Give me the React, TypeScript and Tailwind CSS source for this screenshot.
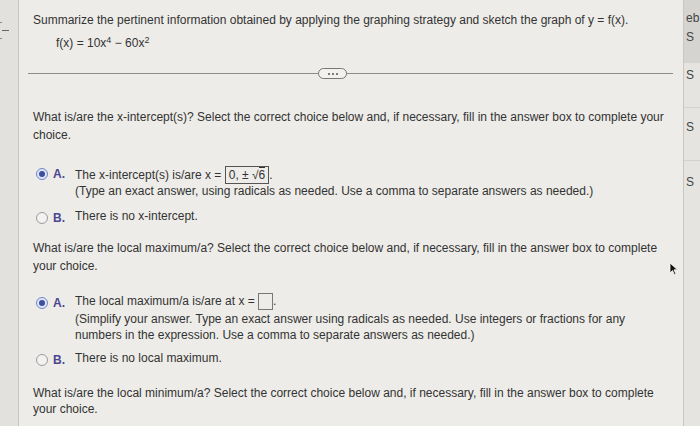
import React from 'react';

const Radio = ({ checked }: { checked?: boolean }) => (
  <span
    className={`inline-flex h-[12px] w-[12px] shrink-0 items-center justify-center rounded-full border ${
      checked ? 'border-[#6f86c9] bg-[#dfe6f7]' : 'border-[#9a9aa6] bg-[#f3f2ef]'
    }`}
  >
    {checked && <span className="h-[6px] w-[6px] rounded-full bg-[#3d4f9e]" />}
  </span>
);

const Choice = ({
  letter,
  checked,
  children,
  className = '',
}: {
  letter: string;
  checked?: boolean;
  children: React.ReactNode;
  className?: string;
}) => (
  <div className={`flex items-start pl-[3px] ${className}`}>
    <div className="flex w-[39px] items-center gap-[5px] pt-[2px]">
      <Radio checked={checked} />
      <span className="font-bold text-[#4b4690]">{letter}</span>
    </div>
    <div className="flex-1">{children}</div>
  </div>
);

const Cursor = () => (
  <svg width="10" height="14" viewBox="0 0 10 14" className="absolute left-[669px] top-[262px]">
    <path d="M1 1 L1 11 L3.5 8.5 L5.5 13 L7 12.3 L5 7.8 L8.5 7.8 Z" fill="#111" stroke="#fff" strokeWidth="0.8" />
  </svg>
);

export default function App() {
  return (
    <div
      className="relative flex h-[426px] w-[700px] overflow-hidden bg-[#edece8] text-[12px] leading-[18px] text-[#333]"
      style={{ fontFamily: '"Liberation Sans", Arial, sans-serif' }}
    >
      {/* left strip */}
      <div className="relative w-[19px] shrink-0 border-r border-[#c9c7c3] bg-[#e3e1dd]">
        <div className="absolute left-[2px] top-[30px] h-[1px] w-[7px] bg-[#666]" />
        <div className="absolute left-[0px] top-[22px] h-[1px] w-[2px] bg-[#888]" />
        <div className="absolute left-[0px] top-[38px] h-[1px] w-[2px] bg-[#888]" />
      </div>

      {/* main */}
      <div className="flex-1 pl-[14px] pr-[10px] pt-[11px]">
        <p>Summarize the pertinent information obtained by applying the graphing strategy and sketch the graph of y = f(x).</p>
        <p className="mt-[5px] pl-[23px]">
          f(x) = 10x<sup className="text-[9px]">4</sup> − 60x<sup className="text-[9px]">2</sup>
        </p>

        <div className="relative -ml-[5px] mt-[21px] h-[1px] bg-[#8d8d8d]">
          <span className="absolute left-[290px] top-[-5px] flex h-[11px] w-[29px] items-center justify-center gap-[2px] rounded-full border border-[#777] bg-[#f2f1ee]">
            <span className="h-[2px] w-[2px] rounded-full bg-[#555]" />
            <span className="h-[2px] w-[2px] rounded-full bg-[#555]" />
            <span className="h-[2px] w-[2px] rounded-full bg-[#555]" />
          </span>
        </div>

        <p className="mt-[34px] pr-[4px]">
          What is/are the x-intercept(s)? Select the correct choice below and, if necessary, fill in the answer box to complete your choice.
        </p>

        <Choice letter="A." checked className="mt-[19px]">
          <div className="pt-[3px]">
            The x-intercept(s) is/are x ={' '}
            <span className="inline-block border border-[#555] px-[3px] leading-[16px] text-[#333]">
              0, ± √<span className="border-t border-[#333]">6</span>
            </span>
            .
          </div>
          <div className="-mt-[2px]">(Type an exact answer, using radicals as needed. Use a comma to separate answers as needed.)</div>
        </Choice>

        <Choice letter="B." className="mt-[7px]">
          <div>There is no x-intercept.</div>
        </Choice>

        <p className="mt-[12px] pr-[4px]">
          What is/are the local maximum/a? Select the correct choice below and, if necessary, fill in the answer box to complete your choice.
        </p>

        <Choice letter="A." checked className="mt-[17px]">
          <div>
            The local maximum/a is/are at x ={' '}
            <span className="inline-block h-[17px] w-[15px] border border-[#777] align-middle" />.
          </div>
          <div className="mt-[1px] leading-[16px]">
            (Simplify your answer. Type an exact answer using radicals as needed. Use integers or fractions for any numbers in the expression. Use a comma to separate answers as needed.)
          </div>
        </Choice>

        <Choice letter="B." className="mt-[6px]">
          <div>There is no local maximum.</div>
        </Choice>

        <p className="mt-[16px] pr-[4px] leading-[16px]">
          What is/are the local minimum/a? Select the correct choice below and, if necessary, fill in the answer box to complete your choice.
        </p>
      </div>

      {/* right strip */}
      <div className="flex w-[17px] shrink-0 flex-col border-l border-[#c9c7c3] bg-[#e6e4e1] text-[12px] text-[#444]">
        <div className="h-[63px] bg-[#d6d4d1] pl-[2px] pt-[10px] leading-[16px]">
          <div>eb</div>
          <div className="mt-[3px]">S</div>
        </div>
        <div className="h-[45px] border-b border-[#d4d2ce] pl-[2px] pt-[3px]">S</div>
        <div className="h-[53px] border-b border-[#d4d2ce] pl-[2px] pt-[10px]">S</div>
        <div className="pl-[2px] pt-[12px]">S</div>
      </div>

      <Cursor />
    </div>
  );
}
